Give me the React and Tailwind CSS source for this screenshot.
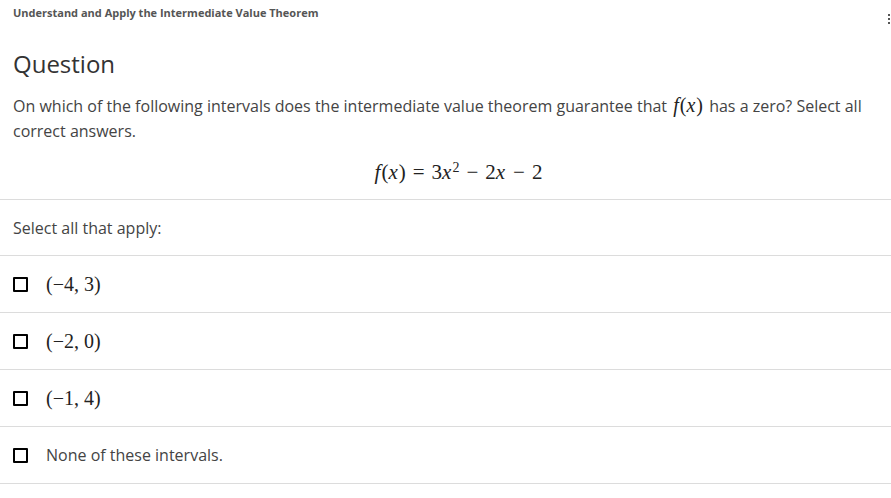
import React from 'react';

const serif = { fontFamily: '"Liberation Serif", "DejaVu Serif", serif' };

const I = ({ children }) => <span className="italic pr-[1px]">{children}</span>;

// binary/relational operator with KaTeX-like spacing
const Op = ({ children }) => <span className="mx-[7px]">{children}</span>;

const Checkbox = () => (
    <span className="inline-block w-[15px] h-[15px] border-2 border-black rounded-[1px] bg-white shrink-0" />
);

const Option = ({ children, math = true }) => (
    <div className="flex items-center h-[57px] border-b border-[#dcdcdc] pl-[13px]">
        <Checkbox />
        {math ? (
            <span className="ml-[18px] text-[20px] text-[#222]" style={serif}>{children}</span>
        ) : (
            <span className="ml-[18px] text-[16px] text-[#444]">{children}</span>
        )}
    </div>
);

export default function App() {
    return (
        <div className="w-[891px] h-[498px] bg-white overflow-hidden text-[#333]" style={{ fontFamily: '"Open Sans", "Noto Sans", sans-serif' }}>
            {/* header */}
            <div className="flex justify-between items-start pl-[13px] pt-[5px] h-[30px]">
                <span className="text-[11px] font-bold text-[#555]">
                    Understand and Apply the Intermediate Value Theorem
                </span>
                <div className="flex flex-col gap-[2px] mt-[9px] mr-[1px]">
                    <span className="w-[2px] h-[2px] bg-[#555]" />
                    <span className="w-[2px] h-[2px] bg-[#555]" />
                    <span className="w-[2px] h-[2px] bg-[#555]" />
                </div>
            </div>

            <div className="px-[13px] pt-[19px]">
                <h1 className="text-[24px] leading-[30px] text-[#333]">Question</h1>
                <p className="mt-[15px] text-[16px] leading-[25px] text-[#444]">
                    On which of the following intervals does the intermediate value theorem guarantee that{' '}
                    <span className="text-[20px] leading-[20px] text-[#222] px-[2px]" style={serif}><I>f</I>(<I>x</I>)</span>{' '}
                    has a zero? Select all correct answers.
                </p>
                <div className="flex justify-center pl-[26px] mt-[13px] h-[42px] text-[21px] text-[#222]" style={serif}>
                    <span>
                        <I>f</I>(<I>x</I>)<Op>=</Op>3<I>x</I><sup className="text-[14px]">2</sup><Op>−</Op>2<I>x</I><Op>−</Op>2
                    </span>
                </div>
            </div>

            <div className="border-t border-[#dcdcdc]" />
            <div className="h-[56px] flex items-center pl-[13px] border-b border-[#dcdcdc]">
                <span className="text-[16px] text-[#444]">Select all that apply:</span>
            </div>

            <Option>(−4, 3)</Option>
            <Option>(−2, 0)</Option>
            <Option>(−1, 4)</Option>
            <Option math={false}>None of these intervals.</Option>
        </div>
    );
}
